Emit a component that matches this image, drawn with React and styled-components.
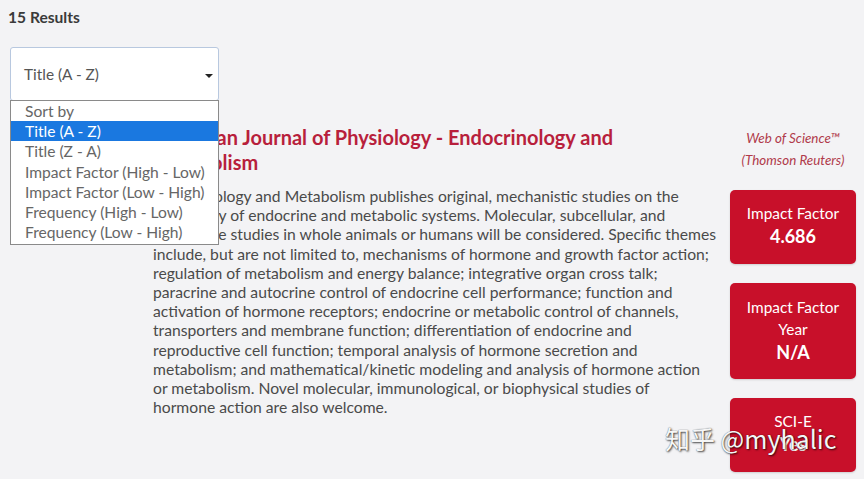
import styled, { createGlobalStyle } from "styled-components";

const GlobalStyle = createGlobalStyle`
    html, body {
        margin: 0;
        padding: 0;
        background: #f3f3f5;
        font-family: Lato, "Open Sans", sans-serif;
        overflow: hidden;
    }
`;

const Page = styled.div`
    position: relative;
    width: 864px;
    height: 479px;
    box-sizing: border-box;
    padding: 6px 8px 0 8px;
`;

const Count = styled.div`
    font-size: 15.6px;
    font-weight: 700;
    color: #3a3a3a;
    line-height: 22px;
`;

const SortWrap = styled.div`
    position: relative;
    width: 209px;
    margin: 19px 0 0 2px;
    z-index: 2;
`;

const Select = styled.div`
    box-sizing: border-box;
    height: 54px;
    background: #fff;
    border: 1px solid #b8c8df;
    border-radius: 3px;
    display: flex;
    align-items: center;
    justify-content: space-between;
    padding: 0 5px 0 13px;
    font-size: 15.4px;
    color: #555;
`;

const Caret = styled.span`
    width: 0;
    height: 0;
    border-left: 4px solid transparent;
    border-right: 4px solid transparent;
    border-top: 4px solid #222;
    margin-top: 3px;
`;

const Options = styled.ul`
    position: absolute;
    top: 53px;
    left: 0;
    right: 0;
    margin: 0;
    padding: 0 0 2px 0;
    list-style: none;
    background: #fff;
    border: 1px solid #8a8a8a;
`;

const Option = styled.li`
    height: 20.2px;
    line-height: 20px;
    padding-left: 14px;
    font-size: 15.6px;
    color: ${({ $active }) => ($active ? "#fff" : "#666")};
    background: ${({ $active }) => ($active ? "#1a78e0" : "transparent")};
    white-space: nowrap;
`;

const Article = styled.div`
    display: grid;
    grid-template-columns: 145px 577px 126px;
    margin-top: 24px;
`;

const Thumb = styled.div``;

const Main = styled.div`
    padding-right: 4px;
`;

const Title = styled.h2`
    margin: 0;
    max-width: 470px;
    font-size: 20px;
    line-height: 25px;
    font-weight: 700;
    color: #b81f3c;
`;

const Desc = styled.p`
    margin: 12px 0 0 0;
    font-size: 15.7px;
    line-height: 19.2px;
    color: #4a4a4a;
    white-space: nowrap;
`;

const Side = styled.div`
    display: flex;
    flex-direction: column;
    align-items: stretch;
    gap: 19px;
    padding-top: 2px;
`;

const Source = styled.div`
    font-size: 13.4px;
    font-style: italic;
    line-height: 22px;
    text-align: center;
    color: #b03a4a;
`;

const Stat = styled.div`
    background: #c8102a;
    border-radius: 5px;
    color: #fff;
    text-align: center;
    padding: ${({ $tall }) => ($tall ? "13px 4px 14px" : "12px 4px 15px")};
    box-shadow: 0 1px 2px rgba(0, 0, 0, 0.15);
`;

const Label = styled.div`
    font-size: 15.4px;
    line-height: 22px;
`;

const Value = styled.div`
    font-size: 18px;
    font-weight: 700;
    line-height: 25px;
`;

const Mark = styled.div`
    position: absolute;
    left: 665px;
    top: 421px;
    font-family: "Noto Sans CJK SC", "Noto Sans", sans-serif;
    font-size: 25px;
    line-height: 34px;
    color: #f6f6f6;
    text-shadow: 1px 1px 2px rgba(0, 0, 0, 0.7), 0 0 1px rgba(0, 0, 0, 0.6);
    white-space: nowrap;
    z-index: 3;
`;

const options = [
    "Sort by",
    "Title (A - Z)",
    "Title (Z - A)",
    "Impact Factor (High - Low)",
    "Impact Factor (Low - High)",
    "Frequency (High - Low)",
    "Frequency (Low - High)",
];

const lines = [
    "Endocrinology and Metabolism publishes original, mechanistic studies on the",
    "physiology of endocrine and metabolic systems. Molecular, subcellular, and",
    "integrative studies in whole animals or humans will be considered. Specific themes",
    "include, but are not limited to, mechanisms of hormone and growth factor action;",
    "regulation of metabolism and energy balance; integrative organ cross talk;",
    "paracrine and autocrine control of endocrine cell performance; function and",
    "activation of hormone receptors; endocrine or metabolic control of channels,",
    "transporters and membrane function; differentiation of endocrine and",
    "reproductive cell function; temporal analysis of hormone secretion and",
    "metabolism; and mathematical/kinetic modeling and analysis of hormone action",
    "or metabolism. Novel molecular, immunological, or biophysical studies of",
    "hormone action are also welcome.",
];

const App = () => (
    <Page>
        <GlobalStyle />
        <Count>15 Results</Count>
        <SortWrap>
            <Select>
                Title (A - Z)
                <Caret />
            </Select>
            <Options>
                {options.map((o) => (
                    <Option key={o} $active={o === "Title (A - Z)"}>{o}</Option>
                ))}
            </Options>
        </SortWrap>
        <Article>
            <Thumb />
            <Main>
                <Title>American Journal of Physiology - Endocrinology and Metabolism</Title>
                <Desc>
                    {lines.map((l, i) => (
                        <span key={i}>{l}{i < lines.length - 1 && <br />}</span>
                    ))}
                </Desc>
            </Main>
            <Side>
                <Source>Web of Science™<br />(Thomson Reuters)</Source>
                <Stat>
                    <Label>Impact Factor</Label>
                    <Value>4.686</Value>
                </Stat>
                <Stat $tall>
                    <Label>Impact Factor<br />Year</Label>
                    <Value>N/A</Value>
                </Stat>
                <Stat>
                    <Label>SCI-E</Label>
                    <Value>Yes</Value>
                </Stat>
            </Side>
        </Article>
        <Mark>知乎 @myhalic</Mark>
    </Page>
);

export default App;
